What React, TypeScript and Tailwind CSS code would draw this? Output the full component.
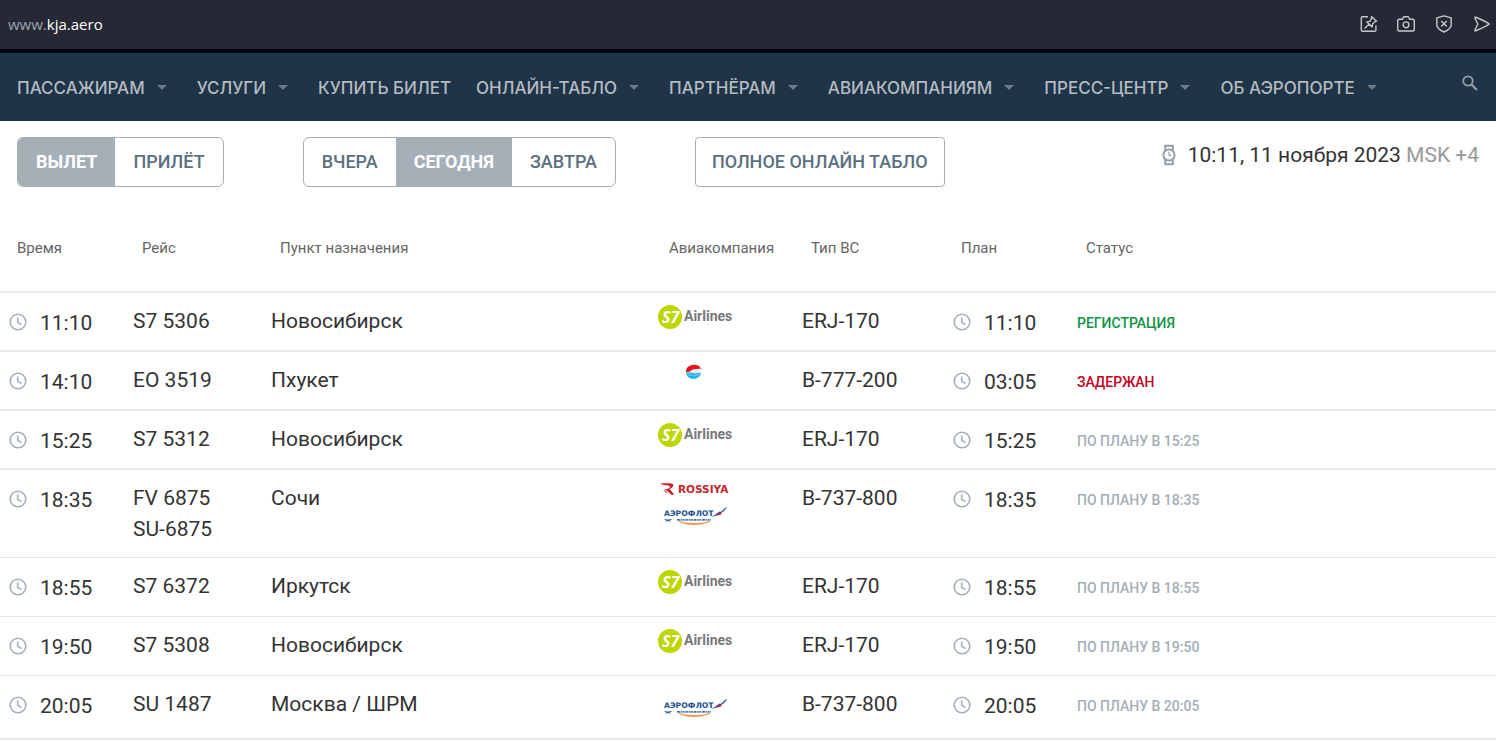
import React, { useState } from "react";

const menu = [
  { title: "Пассажирам", dropdown: true },
  { title: "Услуги", dropdown: true },
  { title: "Купить билет", dropdown: false },
  { title: "Онлайн-табло", dropdown: true },
  { title: "Партнёрам", dropdown: true },
  { title: "Авиакомпаниям", dropdown: true },
  { title: "Пресс-центр", dropdown: true },
  { title: "Об аэропорте", dropdown: true },
];

const flights = [
  { time: "11:10", codes: ["S7 5306"], city: "Новосибирск", airlines: ["s7"], plane: "ERJ-170", plan: "11:10", status: "Регистрация", kind: "open" },
  { time: "14:10", codes: ["EO 3519"], city: "Пхукет", airlines: ["pegas"], plane: "B-777-200", plan: "03:05", status: "Задержан", kind: "delayed" },
  { time: "15:25", codes: ["S7 5312"], city: "Новосибирск", airlines: ["s7"], plane: "ERJ-170", plan: "15:25", status: "По плану в 15:25", kind: "plan" },
  { time: "18:35", codes: ["FV 6875", "SU-6875"], city: "Сочи", airlines: ["rossiya", "aeroflot"], plane: "B-737-800", plan: "18:35", status: "По плану в 18:35", kind: "plan" },
  { time: "18:55", codes: ["S7 6372"], city: "Иркутск", airlines: ["s7"], plane: "ERJ-170", plan: "18:55", status: "По плану в 18:55", kind: "plan" },
  { time: "19:50", codes: ["S7 5308"], city: "Новосибирск", airlines: ["s7"], plane: "ERJ-170", plan: "19:50", status: "По плану в 19:50", kind: "plan" },
  { time: "20:05", codes: ["SU 1487"], city: "Москва / ШРМ", airlines: ["aeroflot"], plane: "B-737-800", plan: "20:05", status: "По плану в 20:05", kind: "plan" },
];

const statusColors: Record<string, string> = {
  open: "text-[#0f9246]",
  delayed: "text-[#c8001e]",
  plan: "text-[#a4afb7]",
};

const AirlineLogo = ({ name }: { name: string }) => {
  if (name === "s7") {
    return (
      <svg className="block h-6 w-[78px]" viewBox="0 0 78 24">
        <circle cx="12" cy="12" r="12" fill="#bed600" />
        <text x="4" y="18" fontFamily="Open Sans, sans-serif" fontSize="16" fontWeight="700" fontStyle="italic" fill="#fff">
          S7
        </text>
        <text x="26" y="16" fontFamily="Roboto, sans-serif" fontSize="14" fontWeight="700" fill="#77797b">
          Airlines
        </text>
      </svg>
    );
  }
  if (name === "pegas") {
    return (
      <svg className="block h-4 w-[78px]" viewBox="0 0 78 16">
        <path d="M28 8a8 7 0 0 1 15-3.500l-6 2-3 1.500z" fill="#e8131f" />
        <path d="M28 8.500h6l3 1 6-1a7.500 6.500 0 0 1-15 0z" fill="#1fb4ea" />
        <path d="M31 8l4-2.500 10-1-4.500 3.200-4 1.300z" fill="#f3f5f7" stroke="#b9c0c8" strokeWidth="0.400" />
        <path d="M29 10.500q7 2.500 13.500 0" stroke="#7fd3f0" strokeWidth="0.800" fill="none" />
      </svg>
    );
  }
  if (name === "rossiya") {
    return (
      <svg className="block h-3.5 w-[78px]" viewBox="0 0 78 14">
        <path d="M2 1.200h10q4 0 3.200 2.800-.6 2.200-3.600 3l4.800 5.800h-3.200L8.500 8.300l-3-1.200q5.800.1 6.400-2.200.3-1.200-1.900-1.300Q5.500 3.500 2 1.200z" fill="#c9252c" />
        <path d="M5 8.300l3 .8 2 2.500-2-1z" fill="#c9252c" />
        <text x="20" y="10.500" fontFamily="DejaVu Sans, sans-serif" fontSize="10.500" fontWeight="700" fill="#c9252c">
          ROSSIYA
        </text>
      </svg>
    );
  }
  return (
    <svg className="block h-[42px] w-[78px]" viewBox="0 1 78 42">
      <text x="6" y="21" fontFamily="DejaVu Sans, sans-serif" fontSize="7.700" fontWeight="700" fill="#1d4f91">
        АЭРОФЛОТ
      </text>
      <path d="M53 21.500q5-1.500 7.500-4.500 4.500-2 8.500-5.500-1 4-6.500 7-2.500 3-9.500 3z" fill="#2c62a8" />
      <path d="M57 19.500q5-.4 8-4.500l-2 4.500q-2.500 1.500-6 0z" fill="#d9272e" />
      <path d="M61 16.500l6-3.500-4 3.800z" fill="#fff" />
      <path d="M5.500 23.800l4 .8 5-.8-2.500 1.700.8 1.300-3-.7-2.300.6.500-1.400z" fill="#3468aa" />
      <path d="M19 24.800h34" stroke="#4c79b4" strokeWidth="1.700" strokeDasharray="3 .6 1.500 .5 2 .7" />
      <path d="M21 26.500q14 6.500 31 0-16 4-31 0z" fill="#f08a32" stroke="#f08a32" strokeWidth="0.600" />
    </svg>
  );
};

const BrowserBar = () => {
  const button = "flex size-5 items-center justify-center";
  const icon = "size-5";
  return (
    <div className="flex h-[53px] items-center justify-between border-b-4 border-[#020512] bg-[#262935] pr-1 pb-px pl-2 text-[#c5c7cb]">
      <div className="font-['Open_Sans',sans-serif] text-[15px] text-[#9ba3b0]">
        www.<span className="text-white">kja.aero</span>
      </div>
      <div className="flex items-center gap-[18px]">
        <button type="button" aria-label="Закрепить" className={button}>
          <svg className={icon} viewBox="0 0 20 20" fill="none" stroke="currentColor" strokeWidth="1.400">
            <path d="M10 2.700H4.500q-1.200 0-1.200 1.200v12.200q0 1.200 1.200 1.200h12.200q1.200 0 1.200-1.200v-4.600" />
            <path d="M13.600 2.600l5 4.600-1.800.6-2.300 2.200-.3 3-5.300-5.100 3-.5 1.500-2.500zM11.300 10l-4.800 4.600" strokeLinejoin="round" />
          </svg>
        </button>
        <button type="button" aria-label="Снимок" className={button}>
          <svg className={icon} viewBox="0 0 20 20" fill="none" stroke="currentColor" strokeWidth="1.400">
            <path d="M6.500 5.300l.7-1.800q.3-.7 1-.7h3.600q.7 0 1 .7l.7 1.800h3q1.800 0 1.800 1.800v8.100q0 1.800-1.800 1.800h-13q-1.800 0-1.800-1.800V7.100q0-1.800 1.800-1.800z" />
            <circle cx="10" cy="10.800" r="2.900" />
          </svg>
        </button>
        <button type="button" aria-label="Защита" className={button}>
          <svg className={icon} viewBox="0 0 20 20" fill="none" stroke="currentColor" strokeWidth="1.400">
            <path d="M10 1.900l7.200 2v6.800q0 4-7.200 7.300-7.200-3.300-7.200-7.300V3.900z" strokeLinejoin="round" />
            <path d="M7.300 7l5.400 5.400M12.700 7l-5.400 5.400" />
          </svg>
        </button>
        <button type="button" aria-label="Отправить" className={button}>
          <svg className={icon} viewBox="0 0 20 20" fill="none" stroke="currentColor" strokeWidth="1.400">
            <path d="M3.200 3q11 4.500 14 7-3 2.500-14 7-.6-.3.200-2l2.400-5-2.400-5q-.8-1.700-.2-2z" strokeLinejoin="round" />
          </svg>
        </button>
      </div>
    </div>
  );
};

const Navbar = () => (
  <nav className="flex h-[68px] justify-between bg-[#1f3447] pr-[18px] pl-[17px] font-['Inter','Open_Sans',sans-serif] text-[17px] font-medium text-[#b4bbc1]">
    <div className="flex items-center gap-[25px] pt-[3px]">
      {menu.map((item) => (
        <a key={item.title} href="#" className="flex items-center whitespace-nowrap uppercase">
          {item.title}
          {item.dropdown && (
            <svg className="mr-[5px] mb-[3px] ml-3 h-[5px] w-[10px]" viewBox="0 0 10 5">
              <path d="M0 0h10L5 5z" fill="#6d7b88" />
            </svg>
          )}
        </a>
      ))}
    </div>
    <button type="button" aria-label="Поиск" className="mt-[22px] size-4">
      <svg className="size-4" viewBox="0 0 16 16" fill="none" stroke="#96a0a9">
        <circle cx="6" cy="6" r="4.700" strokeWidth="1.800" />
        <path d="M9.500 9.500l5.500 5.500" strokeWidth="2.200" />
      </svg>
    </button>
  </nav>
);

const ButtonGroup = ({ options, initial }: { options: string[]; initial: string }) => {
  const [selected, setSelected] = useState(initial);
  return (
    <div className="flex overflow-hidden rounded-md border border-[#a4afb7]">
      {options.map((option) => (
        <button
          key={option}
          type="button"
          onClick={() => setSelected(option)}
          className={
            selected === option
              ? "h-12 bg-[#a4afb7] px-[18px] pb-0.5 text-[18px] font-bold text-white uppercase"
              : "h-12 px-[18px] pb-0.5 text-[18px] font-medium text-[#5a7080] uppercase"
          }
        >
          {option}
        </button>
      ))}
    </div>
  );
};

const TimeCell = ({ time }: { time: string }) => (
  <td className="pt-[15px] pl-[9px] align-top">
    <div className="flex items-center gap-[13px]">
      <svg className="mb-[3px] size-[18px] shrink-0" viewBox="0 0 18 18" fill="none" stroke="#a4afb7" strokeWidth="1.600">
        <circle cx="9" cy="9" r="7.800" />
        <path d="M8.700 4.400v5l3.800 2.100" />
      </svg>
      {time}
    </div>
  </td>
);

const App = () => {
  const head = "border-b-2 border-[#e6eaec] pt-[6px] pb-[31px] pl-[17px] text-left font-normal";
  const cell = "pt-[13px] pb-3 pl-2 align-top";

  return (
    <div className="bg-white font-['Roboto',sans-serif] text-[#333]">
      <BrowserBar />
      <Navbar />
      <div className="flex items-start justify-between px-[17px] pt-4">
        <div className="flex gap-[79px]">
          <ButtonGroup options={["Вылет", "Прилёт"]} initial="Вылет" />
          <ButtonGroup options={["Вчера", "Сегодня", "Завтра"]} initial="Сегодня" />
          <button
            type="button"
            className="h-[50px] rounded-[4px] border border-[#a4afb7] px-4 pb-0.5 text-[18px] font-medium text-[#5a7080] uppercase"
          >
            Полное онлайн табло
          </button>
        </div>
        <div className="flex items-center gap-3 pt-0.5 text-[21px] leading-8 whitespace-nowrap">
          <svg className="h-[22px] w-[14px]" viewBox="0 0 14 22" fill="none" stroke="#93a1ab">
            <circle cx="7" cy="11" r="5.600" strokeWidth="2" />
            <path d="M3.200 6.500V1.700h7.600v4.800M3.200 15.500v4.800h7.600v-4.800" strokeWidth="2" />
            <path d="M7 8v3.300h2.500" strokeWidth="1.200" />
          </svg>
          <span>
            10:11, 11 ноября 2023 <span className="text-[#999]">MSK +4</span>
          </span>
        </div>
      </div>
      <table className="mt-11 w-full table-fixed border-separate border-spacing-0">
        <colgroup>
          <col className="w-[125px]" />
          <col className="w-[138px]" />
          <col className="w-[26%]" />
          <col className="w-[142px]" />
          <col className="w-[150px]" />
          <col className="w-[125px]" />
          <col />
        </colgroup>
        <thead className="text-[15px] text-[#666]">
          <tr className="h-[62px]">
            <th className={head}>Время</th>
            <th className={head}>Рейс</th>
            <th className={head}>Пункт назначения</th>
            <th className={head}>Авиакомпания</th>
            <th className={head}>Тип ВС</th>
            <th className={head}>План</th>
            <th className={head}>Статус</th>
          </tr>
        </thead>
        <tbody className="text-[21px] leading-[31px]">
          {flights.map((flight) => (
            <tr
              key={flight.codes[0]}
              className="h-[59px] *:border-b *:border-[#e6eaec] nth-[-n+3]:*:border-b-2 last:*:border-b-2"
            >
              <TimeCell time={flight.time} />
              <td className={cell}>
                {flight.codes.map((code) => (
                  <div key={code}>{code}</div>
                ))}
              </td>
              <td className={cell}>{flight.city}</td>
              <td className="pt-3 pb-2 pl-1.5 align-top">
                {flight.airlines.map((name) => (
                  <AirlineLogo key={name} name={name} />
                ))}
              </td>
              <td className={cell}>{flight.plane}</td>
              <TimeCell time={flight.plan} />
              <td className="pt-[15px] pl-2 align-top">
                <div className={`text-[14px] leading-[31px] font-medium uppercase ${statusColors[flight.kind]}`}>
                  {flight.status}
                </div>
              </td>
            </tr>
          ))}
        </tbody>
      </table>
    </div>
  );
};

export default App;
